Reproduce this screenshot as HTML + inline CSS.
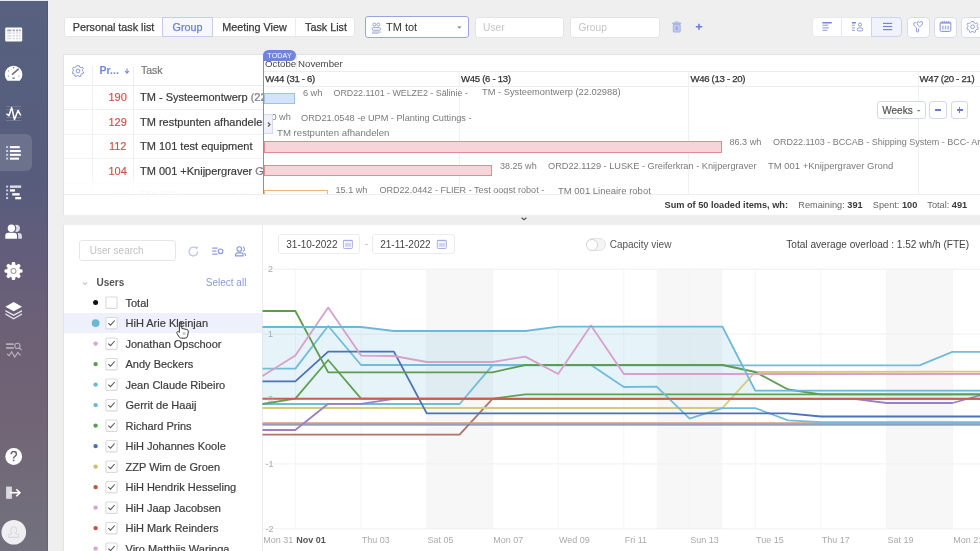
<!DOCTYPE html>
<html><head><meta charset="utf-8">
<style>
*{box-sizing:border-box;margin:0;padding:0}
html,body{width:980px;height:551px;overflow:hidden;background:#efefef;font-family:"Liberation Sans",sans-serif;color:#444;font-size:11px}
.a{position:absolute}
#side{left:0;top:0;width:48px;height:551px;background:linear-gradient(180deg,rgb(89,97,128) 0%,rgb(86,96,126) 9%,rgb(88,92,124) 33.6%,rgb(98,93,123) 45.4%,rgb(108,96,118) 59.9%,rgb(112,99,117) 72.6%,rgb(114,106,120) 86.2%,rgb(114,112,125) 98%)}
.ico{position:absolute;left:0;width:28px;display:flex;justify-content:center}
.tabs{left:64px;top:17px;height:20px;width:291px;background:#fff;border:1px solid #e6e6ea;border-radius:3px}
.tab{position:absolute;top:0;height:20px;line-height:19px;font-size:10.8px;color:#3a3a3a;text-align:center;-webkit-text-stroke:.25px #3a3a3a}
.inp{background:#fff;border:1px solid #e4e4e8;border-radius:3px;height:21px;line-height:19px;color:#bbb;padding-left:9px;font-size:11px}
.btn{background:#fff;border:1px solid #d4d8ef;border-radius:4px;height:21px}
.panel{background:#fff}
.t{position:absolute;white-space:nowrap}
.g{font-size:9.3px;color:#7a7a7a}
.g2{font-size:9.6px}
</style></head><body><div style="position:absolute;left:0;top:0;width:980px;height:551px;will-change:transform">
<div id="side" class="a">
  <div class="a" style="left:0;top:0;width:48px;height:1px;background:#e9e9ee"></div>
  <div class="a" style="left:0;top:134px;width:32px;height:37px;background:rgba(255,255,255,0.13);border-radius:0 6px 6px 0"></div>
<svg class="a" style="left:0;top:0" width="48" height="551" viewBox="0 0 48 551">
 <g fill="#fff">
  <!-- table -->
  <rect x="5.2" y="27.6" width="17" height="13.8" rx="1.2"/>
  <g fill="#a3a7bd">
   <rect x="7.2" y="29.5" width="4.3" height="1.8"/><rect x="12.6" y="29.5" width="2.4" height="1.8"/><rect x="16" y="29.5" width="2.4" height="1.8"/><rect x="19.2" y="29.5" width="1.6" height="1.8"/>
  </g>
  <g fill="#d8dae4">
   <rect x="7.2" y="32.3" width="4.3" height="1.6"/><rect x="12.6" y="32.3" width="2.4" height="1.6"/><rect x="16" y="32.3" width="2.4" height="1.6"/><rect x="19.2" y="32.3" width="1.6" height="1.6"/>
   <rect x="7.2" y="35" width="4.3" height="1.6"/><rect x="12.6" y="35" width="2.4" height="1.6"/><rect x="16" y="35" width="2.4" height="1.6"/><rect x="19.2" y="35" width="1.6" height="1.6"/>
   <rect x="7.2" y="37.7" width="4.3" height="1.6"/><rect x="12.6" y="37.7" width="2.4" height="1.6"/><rect x="16" y="37.7" width="2.4" height="1.6"/><rect x="19.2" y="37.7" width="1.6" height="1.6"/>
  </g>
  <!-- gauge -->
  <path d="M7.46 80.8 A8.8 8.8 0 1 1 19.74 80.8 Z"/>
  <g fill="#6d7088"><rect x="12.2" y="77.4" width="2.8" height="1.3" rx=".6"/><circle cx="13.6" cy="67.8" r=".7"/><circle cx="8.5" cy="71" r=".6"/><circle cx="8.4" cy="76" r=".6"/><circle cx="18.9" cy="76" r=".6"/></g>
  <path d="M12.6 74.2 L18.3 69.2" stroke="#6d7088" stroke-width="1.6" stroke-linecap="round"/>
  <!-- pulse -->
  <g fill="#7d84a4"><rect x="6.1" y="106.3" width="15" height=".7"/><rect x="6.1" y="109.4" width="15" height=".7"/><rect x="6.1" y="117" width="15" height=".7"/><rect x="6.1" y="120" width="15" height=".7"/></g>
  <path d="M6.4 113.7 L8.9 115.8 L11.7 107.6 L14.5 119.6 L18 110.4 L20.8 115.5" fill="none" stroke="#fff" stroke-width="1.5" stroke-linejoin="round"/>
  <!-- list -->
  <g fill="#c9cde6"><rect x="6.1" y="146.1" width="2" height="2"/><rect x="6.1" y="150" width="2" height="2"/><rect x="6.1" y="153.8" width="2" height="2"/><rect x="6.1" y="157.6" width="2" height="2"/></g>
  <rect x="9.9" y="146.1" width="9.9" height="2.1"/><rect x="9.9" y="150" width="10.9" height="2.1"/><rect x="9.9" y="153.8" width="10.9" height="2.1"/><rect x="9.9" y="157.6" width="9.1" height="2.1"/>
  <!-- gantt -->
  <g fill="#c9cde6"><rect x="6.1" y="185.6" width="2" height="2"/><rect x="6.1" y="189.4" width="2" height="2"/><rect x="6.1" y="193.3" width="2" height="2"/><rect x="6.1" y="197.1" width="2" height="2"/></g>
  <rect x="9.9" y="185.5" width="11.2" height="2.3" fill="#dfe1ee"/><rect x="9.9" y="189.3" width="5.1" height="2.3"/><rect x="12.2" y="193.2" width="7.4" height="2.3"/><rect x="15.2" y="197" width="5.9" height="2.3"/>
  <!-- users -->
  <circle cx="11.4" cy="228.2" r="3.7"/>
  <path d="M5.3 238.8 V235.6 Q5.3 232.7 8.3 232.7 H14 Q17 232.7 17 235.6 V238.8 Z"/>
  <mask id="um"><rect x="0" y="215" width="30" height="30" fill="#fff"/><circle cx="11.4" cy="228.2" r="4.9" fill="#000"/><path d="M4.2 240 V235.6 Q4.2 231.6 8.3 231.6 H14 Q18.2 231.6 18.2 235.6 V240 Z" fill="#000"/></mask>
  <g mask="url(#um)" fill="#dcdce8"><circle cx="16.3" cy="228.3" r="3.6"/><path d="M11 238.8 V235.8 Q11 232.9 14 232.9 H18.6 Q21.9 232.9 21.9 235.8 V238.8 Z"/></g>
  <!-- gear -->
  <g transform="translate(13.5 271)">
   <circle r="6.8"/>
   <g id="tooth"><rect x="-1.8" y="-9" width="3.6" height="3.4" rx="1.3"/></g>
   <use href="#tooth" transform="rotate(45)"/><use href="#tooth" transform="rotate(90)"/><use href="#tooth" transform="rotate(135)"/><use href="#tooth" transform="rotate(180)"/><use href="#tooth" transform="rotate(225)"/><use href="#tooth" transform="rotate(270)"/><use href="#tooth" transform="rotate(315)"/>
   <circle r="2.5" fill="none" stroke="#a09cb0" stroke-width="1.1"/>
  </g>
  <!-- layers -->
  <path d="M5.4 313.3 L13.7 317.9 L22 313.3 L22 314.8 L13.7 319.4 L5.4 314.8 Z" fill="#e4e1ec"/>
  <path d="M5.4 310 L13.7 314.6 L22 310 L22 311.5 L13.7 316.1 L5.4 311.5 Z" fill="#ecebf2"/>
  <path d="M5.4 306.7 L13.7 302.1 L22 306.7 L13.7 311.3 Z"/>
  <!-- search pulse -->
  <g opacity=".5">
   <rect x="6.1" y="343.3" width="7.6" height="1.7"/><rect x="6.1" y="347.1" width="7.6" height="1.7"/>
   <circle cx="17.4" cy="345.9" r="2.6" fill="none" stroke="#fff" stroke-width="1.1"/>
   <path d="M19.3 347.9 L21.6 350.2" stroke="#fff" stroke-width="1.2"/>
   <path d="M7.1 354 L9.1 355.6 L11.7 351.8 L14.7 357.1 L17.8 352.5 L20.6 355.3" fill="none" stroke="#fff" stroke-width="1.2"/>
  </g>
  <!-- help -->
  <circle cx="13.7" cy="456.5" r="8.4"/>
  <path d="M11.2 454.2 Q11.2 451.4 13.8 451.4 Q16.4 451.4 16.4 453.9 Q16.4 455.4 14.8 456.3 Q13.6 457 13.6 458.5" fill="none" stroke="#6b6675" stroke-width="1.5"/>
  <rect x="12.8" y="459.6" width="1.6" height="1.6" fill="#6b6675"/>
  <!-- logout -->
  <rect x="6.1" y="486.6" width="5.8" height="12.2" fill="#d9d8de"/>
  <path d="M9.9 492.7 H20" stroke="#fff" stroke-width="1.6"/>
  <path d="M16.3 489.2 L19.9 492.7 L16.3 496.3" fill="none" stroke="#fff" stroke-width="1.6"/>
  <!-- avatar -->
  <circle cx="13.8" cy="532.2" r="12.3" fill="#efeef1"/>
  <path d="M12 533.5 Q10.8 532.3 10.8 529.7 Q10.8 526.8 13.7 526.8 Q16.6 526.8 16.6 529.7 Q16.6 532.3 15.4 533.5 L18.7 534.6 V537.3 H8.8 V534.6 Z" fill="none" stroke="#cfcfd4" stroke-width=".8"/>
 </g>
</svg>
</div>
<div class="a" style="left:47px;top:1px;width:1px;height:550px;background:rgba(0,0,20,.1)"></div>

<!-- toolbar -->
<div class="a tabs">
  <div class="tab" style="left:0;width:97px">Personal task list</div>
  <div class="a" style="left:97px;top:-1px;width:51px;height:20px;border:1px solid #c5cdee;background:#f7f8fd"></div>
  <div class="tab" style="left:97px;width:51px;color:#6b7fd0;-webkit-text-stroke:.25px #6b7fd0">Group</div>
  <div class="a" style="left:230px;top:0;width:1px;height:18px;background:#ececf0"></div>
  <div class="tab" style="left:148px;width:83px">Meeting View</div>
  <div class="tab" style="left:231px;width:60px">Task List</div>
</div>
<div class="a" style="left:365px;top:16px;width:104px;height:22px;background:#fff;border:1px solid #9aa6e2;border-radius:3px"></div>
<div class="t" style="left:386px;top:21px;font-size:11px;color:#333">TM tot</div>
<div class="a inp" style="left:474.6px;top:16.6px;width:89.5px;height:21px;font-size:10.2px;padding-left:7.5px;line-height:20px;color:#c4c4c4">User</div>
<div class="a inp" style="left:570px;top:16.6px;width:89.5px;height:21px;font-size:10.2px;padding-left:7.5px;line-height:20px;color:#c4c4c4">Group</div>

<svg class="a" style="left:360px;top:12px" width="360" height="30" viewBox="360 12 360 30">
  <!-- users icon in select -->
  <g fill="none" stroke="#8d9ad8" stroke-width=".9">
   <circle cx="374.3" cy="24.6" r="1.5"/><circle cx="378.3" cy="24.6" r="1.5"/>
   <rect x="372.2" y="27.6" width="8.3" height="2.6" rx="1.2"/>
  </g>
  <rect x="372" y="31.6" width="8.8" height=".9" fill="#8d9ad8"/><rect x="372" y="33.2" width="6.5" height=".8" fill="#b8c0e6"/>
  <path d="M457.2 26.4 H461.6 L459.4 28.6 Z" fill="#777"/>
  <!-- trash -->
  <path d="M672.2 23.3 H681.2" stroke="#a7b2e6" stroke-width="1.3"/>
  <path d="M674.6 23 Q674.6 22 676 22 H677.6 Q679 22 679 23" fill="none" stroke="#a7b2e6" stroke-width="1"/>
  <rect x="673.3" y="24.4" width="6.9" height="7.6" rx="1" fill="#c6cef0" stroke="#a7b2e6" stroke-width="1.1"/>
  <rect x="675.4" y="26" width="2.7" height="4.4" fill="#a3aee4"/>
  <!-- plus -->
  <path d="M695.8 26.8 H702.3 M699 23.8 V29.8" stroke="#6b7fd8" stroke-width="1.6"/>
</svg>
<div class="a" style="left:812px;top:16.5px;width:90px;height:20.5px;background:#fff;border:1px solid #e8e8ee;border-radius:4px"></div>
<div class="a" style="left:841px;top:17px;width:1px;height:19.5px;background:#e8e8ee"></div>
<div class="a" style="left:871px;top:16.5px;width:31px;height:20.5px;background:#f1f3fc;border:1px solid #cdd3ef;border-radius:0 4px 4px 0"></div>
<div class="a" style="left:906.5px;top:16.5px;width:23px;height:21px;background:#fff;border:1px solid #d6dbf2;border-radius:4px"></div>
<div class="a" style="left:934.3px;top:16.5px;width:22.4px;height:21px;background:#fff;border:1px solid #d6dbf2;border-radius:4px"></div>
<div class="a" style="left:961.2px;top:16.5px;width:23px;height:21px;background:#fff;border:1px solid #d6dbf2;border-radius:4px"></div>
<svg class="a" style="left:800px;top:12px" width="180" height="30" viewBox="800 12 180 30">
  <g fill="#7585d2"><rect x="822.3" y="22" width="9.4" height="1.5"/></g>
  <g fill="#a8b1dc"><rect x="822.3" y="24.6" width="6.1" height="1.3"/><rect x="822.3" y="27.2" width="6.6" height="1.3"/><rect x="822.3" y="29.7" width="5.1" height="1.3"/>
   <rect x="851.9" y="24.6" width="3" height="1.3"/><rect x="851.9" y="27.2" width="3" height="1.3"/><rect x="851.9" y="29.7" width="3" height="1.3"/></g>
  <rect x="851.9" y="22" width="4" height="1.5" fill="#7585d2"/>
  <g fill="none" stroke="#8591cc" stroke-width=".9"><circle cx="860" cy="24.6" r="1.6"/><rect x="857.2" y="27.9" width="5.6" height="3" rx="1.5"/></g>
  <g fill="#7a86c0"><rect x="883" y="22.8" width="9.2" height="1.2"/><rect x="883" y="25.9" width="9.2" height="1.2"/><rect x="883" y="29" width="9.2" height="1.2"/></g>
  <!-- funnel heart -->
  <path d="M915.7 22.4 Q913.4 22.7 913.6 24.3 Q914.1 26 916.4 27.8 V31.3 Q916.6 32.1 917.7 32 Q918.6 31.9 918.6 31.2 V28.6" fill="none" stroke="#8290cf" stroke-width=".9"/>
  <path d="M919.8 27 Q916.8 24.8 917 23 Q917.3 21.3 918.7 21.6 Q919.5 21.8 919.8 22.6 Q920.2 21.6 921.2 21.5 Q922.8 21.5 922.6 23.2 Q922.3 25 919.8 27 Z" fill="none" stroke="#8290cf" stroke-width=".9"/>
  <!-- calendar -->
  <rect x="940.2" y="22.2" width="10.6" height="9.2" rx="1.2" fill="none" stroke="#8290cf" stroke-width="1"/>
  <rect x="940.2" y="22.6" width="10.6" height="1" fill="#8290cf"/><g fill="#8290cf"><circle cx="942.6" cy="21.8" r=".6"/><circle cx="944.6" cy="21.8" r=".6"/><circle cx="946.6" cy="21.8" r=".6"/><circle cx="948.6" cy="21.8" r=".6"/></g>
  <g fill="#a5b0dc"><rect x="942.2" y="25.6" width="1.4" height="4"/><rect x="944.8" y="25.6" width="1.4" height="4"/><rect x="947.4" y="25.6" width="1.4" height="4"/></g>
  <!-- gear -->
  <g transform="translate(972.6 26.8)" fill="none" stroke="#8a96d2" stroke-width=".9">
   <path d="M-1.2 -5.3 L1.2 -5.3 L1.6 -3.9 L2.9 -3.3 L4.2 -4 L5.3 -2.4 L4.4 -1.3 L4.6 0 L5.6 0.9 L5 2.7 L3.6 2.7 L2.8 3.8 L3 5.1 L1.3 5.7 L0.5 4.6 L-0.9 4.6 L-1.6 5.7 L-3.3 5 L-3.1 3.6 L-4 2.7 L-5.3 2.8 L-5.8 1 L-4.7 0.2 L-4.7 -1.2 L-5.6 -2.2 L-4.6 -3.8 L-3.3 -3.3 L-2.1 -4 Z"/>
   <circle r="1.9"/>
  </g>
</svg>
<!-- top panel -->
<div class="a panel" style="left:63px;top:54px;width:920px;height:161px;border-left:1px solid #e3e3e3;border-top:1.5px solid #e2e2e2"></div>
<div id="gantt" class="a" style="left:64px;top:55px;width:916px;height:160px;overflow:hidden">
 <!-- left table grid -->
 <div class="a" style="left:0;top:30px;width:199.5px;height:1px;background:#ebebef"></div>
 <div class="a" style="left:28.3px;top:11px;width:1px;height:128px;background:#efeff2"></div>
 <div class="a" style="left:69.3px;top:11px;width:1px;height:128px;background:#efeff2"></div>
 <div class="a" style="left:0;top:54px;width:199.5px;height:1px;background:#f1f1f4"></div>
 <div class="a" style="left:0;top:78.8px;width:199.5px;height:1px;background:#f1f1f4"></div>
 <div class="a" style="left:0;top:103.3px;width:199.5px;height:1px;background:#f1f1f4"></div>
 <div class="a" style="left:0;top:127.8px;width:199.5px;height:1px;background:#f4f4f6"></div>
 <svg class="a" style="left:8px;top:10px" width="12" height="12" viewBox="-6 -6 12 12">
  <g fill="none" stroke="#7f8fd6" stroke-width=".9">
   <path d="M-1.2 -5.3 L1.2 -5.3 L1.6 -3.9 L2.9 -3.3 L4.2 -4 L5.3 -2.4 L4.4 -1.3 L4.6 0 L5.6 0.9 L5 2.7 L3.6 2.7 L2.8 3.8 L3 5.1 L1.3 5.7 L0.5 4.6 L-0.9 4.6 L-1.6 5.7 L-3.3 5 L-3.1 3.6 L-4 2.7 L-5.3 2.8 L-5.8 1 L-4.7 0.2 L-4.7 -1.2 L-5.6 -2.2 L-4.6 -3.8 L-3.3 -3.3 L-2.1 -4 Z"/>
   <circle r="1.9"/>
  </g>
 </svg>
 <div class="t" style="left:35.6px;top:9px;font-size:10.5px;font-weight:bold;color:#7485d4">Pr...</div>
 <svg class="a" style="left:60px;top:13px" width="6" height="6" viewBox="0 0 6 6"><path d="M3 0.4 V5 M1 3 L3 5.2 L5 3" fill="none" stroke="#7a8ad6" stroke-width="1.1"/></svg>
 <div class="t" style="left:77px;top:9px;font-size:10.5px;color:#777;-webkit-text-stroke:.2px #777">Task</div>
 <div class="t" style="left:44.5px;top:36px;width:18px;text-align:right;font-size:11px;color:#cc5046;-webkit-text-stroke:.15px #cc5046">190</div>
 <div class="t" style="left:44.5px;top:60.5px;width:18px;text-align:right;font-size:11px;color:#cc5046;-webkit-text-stroke:.15px #cc5046">129</div>
 <div class="t" style="left:44.5px;top:85px;width:18px;text-align:right;font-size:11px;color:#cc5046;-webkit-text-stroke:.15px #cc5046">112</div>
 <div class="t" style="left:44.5px;top:109.5px;width:18px;text-align:right;font-size:11px;color:#cc5046;-webkit-text-stroke:.15px #cc5046">104</div>
 <div class="t" style="left:44.5px;top:134px;width:18px;text-align:right;font-size:11px;color:#cc5046;-webkit-text-stroke:.15px #cc5046;opacity:.25">100</div>
 <div class="t" style="left:76px;top:36px;font-size:11px;color:#3a3a3a;-webkit-text-stroke:.2px #3a3a3a">TM - Systeemontwerp <span style="color:#999">(22.02988)</span></div>
 <div class="t" style="left:76px;top:60.5px;font-size:11px;color:#3a3a3a;-webkit-text-stroke:.2px #3a3a3a">TM restpunten afhandelen</div>
 <div class="t" style="left:76px;top:85px;font-size:11px;color:#3a3a3a;-webkit-text-stroke:.2px #3a3a3a">TM 101 test equipment</div>
 <div class="t" style="left:76px;top:109.5px;font-size:11px;color:#3a3a3a;-webkit-text-stroke:.2px #3a3a3a">TM 001 +Knijpergraver <span style="color:#999">Grond</span></div>
 <div class="t" style="left:76px;top:134px;font-size:11px;color:#3a3a3a;-webkit-text-stroke:.2px #3a3a3a;opacity:.25">TM 001 Lineaire robot</div>
 <div class="a" style="left:0;top:120px;width:199.5px;height:19px;background:linear-gradient(180deg,rgba(255,255,255,0) 0%,rgba(255,255,255,.8) 45%,rgba(255,255,255,.9) 100%)"></div>
 <div class="a" style="left:0;top:138.5px;width:199.5px;height:22px;background:#fff"></div>

 <!-- gantt area -->
 <div class="a" style="left:199.5px;top:0;width:720px;height:139px;background:#fff;overflow:hidden">
  <div class="a" style="left:0;top:15.5px;width:720px;height:1px;background:#ededf1"></div>
  <div class="a" style="left:0;top:30.5px;width:720px;height:1px;background:#ededf1"></div>
  <div class="a" style="left:32.8px;top:0;width:1px;height:15.5px;background:#ededf1"></div>
  <div class="a" style="left:195.5px;top:15.5px;width:1px;height:124px;background:#f0f0f3"></div>
  <div class="a" style="left:424.9px;top:15.5px;width:1px;height:124px;background:#f0f0f3"></div>
  <div class="a" style="left:654.1px;top:15.5px;width:1px;height:124px;background:#f0f0f3"></div>
  <div class="t" style="left:1.5px;top:3px;font-size:9.7px;color:#444;width:31px;overflow:hidden">October</div>
  <div class="t" style="left:34.5px;top:3px;font-size:9.7px;color:#444">November</div>
  <div class="t" style="left:1.8px;top:18.4px;font-size:9.6px;letter-spacing:-.3px;color:#333;-webkit-text-stroke:.25px #333">W44 (31 - 6)</div>
  <div class="t" style="left:197.5px;top:18.4px;font-size:9.6px;letter-spacing:-.3px;color:#333;-webkit-text-stroke:.25px #333">W45 (6 - 13)</div>
  <div class="t" style="left:426.9px;top:18.4px;font-size:9.6px;letter-spacing:-.3px;color:#333;-webkit-text-stroke:.25px #333">W46 (13 - 20)</div>
  <div class="t" style="left:656.1px;top:18.4px;font-size:9.6px;letter-spacing:-.3px;color:#333;-webkit-text-stroke:.25px #333">W47 (20 - 21)</div>
  <!-- bars -->
  <div class="a" style="left:0.5px;top:37.7px;width:31px;height:11px;background:#d3e3fa;border:1px solid #9fbff0"></div>
  <div class="a" style="left:0.5px;top:86.2px;width:457.5px;height:11.5px;background:#f5d5d9;border:1px solid #e08c92"></div>
  <div class="a" style="left:0.5px;top:110.2px;width:228px;height:11.3px;background:#f5d5d9;border:1px solid #e08c92"></div>
  <div class="a" style="left:0.5px;top:135px;width:64px;height:11px;background:#fff;border:1px solid #efb77a"></div>
  <div class="t g" style="left:39.4px;top:32.6px;font-size:9.28px">6 wh</div>
  <div class="t g" style="left:70px;top:32.6px;font-size:8.87px">ORD22.1101 - WELZE2 - Sälinie -</div>
  <div class="t g g2" style="left:218.5px;top:32.2px;font-size:9.3px">TM - Systeemontwerp (22.02988)</div>
  <div class="t g" style="left:2.8px;top:57px;font-size:9.2px">10 wh</div>
  <div class="t g" style="left:37.5px;top:57.5px;font-size:9.2px">ORD21.0548 -e UPM - Planting Cuttings -</div>
  <div class="t g g2" style="left:13.5px;top:71.9px;font-size:9.63px">TM restpunten afhandelen</div>
  <div class="t g" style="left:465.9px;top:81.6px;font-size:9.13px">86.3 wh</div>
  <div class="t g" style="left:509.4px;top:81.6px;font-size:9.0px">ORD22.1103 - BCCAB - Shipping System - BCC- Ar</div>
  <div class="t g" style="left:236.5px;top:105.5px;font-size:9.04px">38.25 wh</div>
  <div class="t g" style="left:284.5px;top:105.5px;font-size:9.21px">ORD22.1129 - LUSKE - Greiferkran - Knijpergraver</div>
  <div class="t g g2" style="left:504.5px;top:105.1px;font-size:9.46px">TM 001 +Knijpergraver Grond</div>
  <div class="t g" style="left:72px;top:130.3px;font-size:9.1px">15.1 wh</div>
  <div class="t g" style="left:115.9px;top:130.3px;font-size:9.09px">ORD22.0442 - FLIER - Test oogst robot -</div>
  <div class="t g g2" style="left:294.5px;top:129.9px;font-size:9.49px">TM 001 Lineaire robot</div>
  <!-- handle -->
  <div class="a" style="left:-0.8px;top:59.2px;width:10.2px;height:20px;background:#eef0fb;border:1px solid #d6daf0;border-left:none"></div>
  <svg class="a" style="left:2px;top:66px" width="6" height="7" viewBox="0 0 6 7"><path d="M2 1.5 L4 3.5 L2 5.5" fill="none" stroke="#555" stroke-width="1.1"/></svg>
  <!-- today line -->
  <!-- weeks controls -->
  <div class="a btn" style="left:613px;top:46.1px;width:49px;height:17.8px;border-color:#d3d8f0;border-radius:3px"></div>
  <div class="t" style="left:618.8px;top:49.6px;font-size:10px;color:#555;-webkit-text-stroke:.2px #555">Weeks</div>
  <svg class="a" style="left:652px;top:54.3px" width="6" height="4" viewBox="0 0 6 4"><path d="M1 1 H4.6 L2.8 2.8 Z" fill="#777"/></svg>
  <div class="a btn" style="left:665.7px;top:46.1px;width:18.3px;height:17.8px;border-color:#d3d8f0;border-radius:3px"></div>
  <div class="a" style="left:671.8px;top:54.3px;width:6px;height:1.8px;background:#6a7bd0"></div>
  <div class="a btn" style="left:687.1px;top:46.1px;width:17.7px;height:17.8px;border-color:#d3d8f0;border-radius:3px"></div>
  <div class="a" style="left:693px;top:54.3px;width:6px;height:1.7px;background:#6a7bd0"></div>
  <div class="a" style="left:695.15px;top:52.2px;width:1.7px;height:6px;background:#6a7bd0"></div>
 </div>
 <!-- today badge -->
 <div class="a" style="left:199px;top:0;width:1px;height:139px;background:#7e8ed9"></div>
 <!-- footer -->
 <div class="a" style="left:0;top:138.5px;width:916px;height:1px;background:#eeeef1"></div>
 <div class="t" style="left:600.5px;top:145px;font-size:9.2px;color:#666"><b style="color:#3a3a3a">Sum of 50 loaded items, wh:</b>&nbsp;&nbsp;&nbsp; Remaining: <b style="color:#3a3a3a">391</b>&nbsp;&nbsp;&nbsp; Spent: <b style="color:#3a3a3a">100</b>&nbsp;&nbsp;&nbsp; Total: <b style="color:#3a3a3a">491</b></div>
</div>
<div class="a" style="left:64px;top:215px;width:920px;height:10px;background:#eeeeee"></div>
<svg class="a" style="left:520px;top:216px" width="8" height="6" viewBox="0 0 8 6"><path d="M1.6 1.8 L4 3.8 L6.4 1.8" fill="none" stroke="#555" stroke-width="1.2"/></svg>
<!-- bottom panel -->
<div class="a panel" style="left:63px;top:225px;width:920px;height:330px;border-left:1px solid #e3e3e3"></div>
<div class="a" style="left:262px;top:225px;width:1px;height:330px;background:#ececf0"></div>
<div class="a" style="left:64px;top:313.2px;width:198px;height:20px;background:#eef1fb"></div>
<div class="a inp" style="left:79.2px;top:240px;width:96.4px;height:20.6px;border-color:#e6e6ea;color:#c2c2c2;font-size:10px;padding-left:9.5px">User search</div>
<svg class="a" style="left:64px;top:226px" width="198" height="325" viewBox="64 226 198 325">
 <path d="M197.6 251.6 A4.3 4.3 0 1 1 195.6 247.9" fill="none" stroke="#bfc6ec" stroke-width="1.3"/>
 <path d="M194.6 246.4 L198.2 246.9 L196.6 249.8 Z" fill="#bfc6ec"/>
 <g fill="#8a98e0"><rect x="212.2" y="247.5" width="5.4" height="1.2"/><rect x="212.2" y="250.5" width="4.2" height="1.2"/><rect x="212.2" y="253.5" width="5.4" height="1.2"/></g>
 <circle cx="220.6" cy="251.3" r="2.3" fill="none" stroke="#8a98e0" stroke-width="1.1"/>
 <g fill="none" stroke="#8a98e0" stroke-width="1.1"><circle cx="239.3" cy="249" r="2.3"/><path d="M235.6 255.9 V254.9 Q235.6 252.9 237.6 252.9 H241.1 Q243.1 252.9 243.1 254.9 V255.9 Z"/><path d="M243 246.6 Q244.6 247.6 244.4 249.4 Q244.2 250.8 243 251.3 M244.3 253.1 Q245.6 253.9 245.6 255.9"/></g>
 <path d="M82.8 282.4 L85 284.4 L87.2 282.4" fill="none" stroke="#9aa6dc" stroke-width="1"/>
 <circle cx="95.6" cy="302.6" r="2.5" fill="#111"/>
 <rect x="105.9" y="297.0" width="11.2" height="11.4" rx="1.2" fill="#fff" stroke="#d9d9dc" stroke-width="1.1"/>
 <circle cx="95.6" cy="323.1" r="3.9" fill="#6ab8d6"/>
 <rect x="105.9" y="317.5" width="11.2" height="11.4" rx="1.2" fill="#fff" stroke="#d9d9dc" stroke-width="1.1"/>
 <path d="M108.3 323.1 L110.5 325.2 L114.7 320.5" fill="none" stroke="#5a5a5a" stroke-width="1.1"/>
 <circle cx="95.6" cy="343.6" r="2.2" fill="#dca3d2"/>
 <rect x="105.9" y="338.0" width="11.2" height="11.4" rx="1.2" fill="#fff" stroke="#d9d9dc" stroke-width="1.1"/>
 <path d="M108.3 343.6 L110.5 345.7 L114.7 341.0" fill="none" stroke="#5a5a5a" stroke-width="1.1"/>
 <circle cx="95.6" cy="364.1" r="2.2" fill="#5c9e50"/>
 <rect x="105.9" y="358.5" width="11.2" height="11.4" rx="1.2" fill="#fff" stroke="#d9d9dc" stroke-width="1.1"/>
 <path d="M108.3 364.1 L110.5 366.2 L114.7 361.5" fill="none" stroke="#5a5a5a" stroke-width="1.1"/>
 <circle cx="95.6" cy="384.6" r="2.2" fill="#6ab8d6"/>
 <rect x="105.9" y="379.0" width="11.2" height="11.4" rx="1.2" fill="#fff" stroke="#d9d9dc" stroke-width="1.1"/>
 <path d="M108.3 384.6 L110.5 386.7 L114.7 382.0" fill="none" stroke="#5a5a5a" stroke-width="1.1"/>
 <circle cx="95.6" cy="405.1" r="2.2" fill="#6ab8d6"/>
 <rect x="105.9" y="399.5" width="11.2" height="11.4" rx="1.2" fill="#fff" stroke="#d9d9dc" stroke-width="1.1"/>
 <path d="M108.3 405.1 L110.5 407.2 L114.7 402.5" fill="none" stroke="#5a5a5a" stroke-width="1.1"/>
 <circle cx="95.6" cy="425.6" r="2.2" fill="#5c9e50"/>
 <rect x="105.9" y="420.0" width="11.2" height="11.4" rx="1.2" fill="#fff" stroke="#d9d9dc" stroke-width="1.1"/>
 <path d="M108.3 425.6 L110.5 427.7 L114.7 423.0" fill="none" stroke="#5a5a5a" stroke-width="1.1"/>
 <circle cx="95.6" cy="446.1" r="2.2" fill="#4a6fb8"/>
 <rect x="105.9" y="440.5" width="11.2" height="11.4" rx="1.2" fill="#fff" stroke="#d9d9dc" stroke-width="1.1"/>
 <path d="M108.3 446.1 L110.5 448.2 L114.7 443.5" fill="none" stroke="#5a5a5a" stroke-width="1.1"/>
 <circle cx="95.6" cy="466.6" r="2.2" fill="#c9c262"/>
 <rect x="105.9" y="461.0" width="11.2" height="11.4" rx="1.2" fill="#fff" stroke="#d9d9dc" stroke-width="1.1"/>
 <path d="M108.3 466.6 L110.5 468.7 L114.7 464.0" fill="none" stroke="#5a5a5a" stroke-width="1.1"/>
 <circle cx="95.6" cy="487.1" r="2.2" fill="#c8503c"/>
 <rect x="105.9" y="481.5" width="11.2" height="11.4" rx="1.2" fill="#fff" stroke="#d9d9dc" stroke-width="1.1"/>
 <path d="M108.3 487.1 L110.5 489.2 L114.7 484.5" fill="none" stroke="#5a5a5a" stroke-width="1.1"/>
 <circle cx="95.6" cy="507.6" r="2.2" fill="#dca3d2"/>
 <rect x="105.9" y="502.0" width="11.2" height="11.4" rx="1.2" fill="#fff" stroke="#d9d9dc" stroke-width="1.1"/>
 <path d="M108.3 507.6 L110.5 509.7 L114.7 505.0" fill="none" stroke="#5a5a5a" stroke-width="1.1"/>
 <circle cx="95.6" cy="528.1" r="2.2" fill="#c8503c"/>
 <rect x="105.9" y="522.5" width="11.2" height="11.4" rx="1.2" fill="#fff" stroke="#d9d9dc" stroke-width="1.1"/>
 <path d="M108.3 528.1 L110.5 530.2 L114.7 525.5" fill="none" stroke="#5a5a5a" stroke-width="1.1"/>
 <circle cx="95.6" cy="548.6" r="2.2" fill="#dca3d2"/>
 <rect x="105.9" y="543.0" width="11.2" height="11.4" rx="1.2" fill="#fff" stroke="#d9d9dc" stroke-width="1.1"/>
 <path d="M108.3 548.6 L110.5 550.7 L114.7 546.0" fill="none" stroke="#5a5a5a" stroke-width="1.1"/>
 <path d="M179.4 331.8 V323.2 Q179.4 321.9 180.6 321.9 Q181.8 321.9 181.8 323.2 V328.4 L186.8 329.5 Q188.5 329.9 188.3 331.8 L187.6 335.9 Q187.2 338.2 185 338.2 H181.6 Q180.2 338.2 179.2 337 L176.9 333.3 Q176.4 332.1 177.5 331.7 Q178.5 331.4 179.4 332.4 Z" fill="#fff" stroke="#3a3a3a" stroke-width="1"/>
 <path d="M183.2 332.2 V334.8 M184.8 332.4 V334.8" stroke="#777" stroke-width=".6"/>
</svg>
<div class="t" style="left:96.5px;top:277.2px;font-size:10px;font-weight:bold;color:#555">Users</div>
<div class="t" style="left:205.8px;top:276.5px;font-size:10px;color:#8a9ad8">Select all</div>
<div class="t" style="left:125.5px;top:296.7px;font-size:11px;color:#3c3c3c;-webkit-text-stroke:.2px #3c3c3c">Total</div>
<div class="t" style="left:125.5px;top:317.2px;font-size:11px;color:#3c3c3c;-webkit-text-stroke:.2px #3c3c3c">HiH Arie Kleinjan</div>
<div class="t" style="left:125.5px;top:337.7px;font-size:11px;color:#3c3c3c;-webkit-text-stroke:.2px #3c3c3c">Jonathan Opschoor</div>
<div class="t" style="left:125.5px;top:358.2px;font-size:11px;color:#3c3c3c;-webkit-text-stroke:.2px #3c3c3c">Andy Beckers</div>
<div class="t" style="left:125.5px;top:378.7px;font-size:11px;color:#3c3c3c;-webkit-text-stroke:.2px #3c3c3c">Jean Claude Ribeiro</div>
<div class="t" style="left:125.5px;top:399.2px;font-size:11px;color:#3c3c3c;-webkit-text-stroke:.2px #3c3c3c">Gerrit de Haaij</div>
<div class="t" style="left:125.5px;top:419.7px;font-size:11px;color:#3c3c3c;-webkit-text-stroke:.2px #3c3c3c">Richard Prins</div>
<div class="t" style="left:125.5px;top:440.2px;font-size:11px;color:#3c3c3c;-webkit-text-stroke:.2px #3c3c3c">HiH Johannes Koole</div>
<div class="t" style="left:125.5px;top:460.7px;font-size:11px;color:#3c3c3c;-webkit-text-stroke:.2px #3c3c3c">ZZP Wim de Groen</div>
<div class="t" style="left:125.5px;top:481.2px;font-size:11px;color:#3c3c3c;-webkit-text-stroke:.2px #3c3c3c">HiH Hendrik Hesseling</div>
<div class="t" style="left:125.5px;top:501.7px;font-size:11px;color:#3c3c3c;-webkit-text-stroke:.2px #3c3c3c">HiH Jaap Jacobsen</div>
<div class="t" style="left:125.5px;top:522.2px;font-size:11px;color:#3c3c3c;-webkit-text-stroke:.2px #3c3c3c">HiH Mark Reinders</div>
<div class="t" style="left:125.5px;top:542.7px;font-size:11px;color:#3c3c3c;-webkit-text-stroke:.2px #3c3c3c">Viro Matthijs Waringa</div>
<!-- CHART -->
<svg class="a" style="left:0;top:0" width="980" height="551" viewBox="0 0 980 551">
<rect x="426.75" y="269.2" width="65.70" height="259.6" fill="#f7f7f8"/>
<rect x="656.70" y="269.2" width="65.70" height="259.6" fill="#f7f7f8"/>
<rect x="886.65" y="269.2" width="65.70" height="259.6" fill="#f7f7f8"/>
<rect x="262.5" y="268.7" width="718" height="1" fill="#efeff1"/>
<rect x="262.5" y="333.6" width="718" height="1" fill="#efeff1"/>
<rect x="262.5" y="398.5" width="718" height="1" fill="#efeff1"/>
<rect x="262.5" y="463.4" width="718" height="1" fill="#efeff1"/>
<rect x="262.5" y="528.3" width="718" height="1" fill="#efeff1"/>
<rect x="294.85" y="269.2" width="1" height="259.6" fill="#f5f5f6"/>
<rect x="360.55" y="269.2" width="1" height="259.6" fill="#f5f5f6"/>
<rect x="426.25" y="269.2" width="1" height="259.6" fill="#f5f5f6"/>
<rect x="491.95" y="269.2" width="1" height="259.6" fill="#f5f5f6"/>
<rect x="557.65" y="269.2" width="1" height="259.6" fill="#f5f5f6"/>
<rect x="623.35" y="269.2" width="1" height="259.6" fill="#f5f5f6"/>
<rect x="689.05" y="269.2" width="1" height="259.6" fill="#f5f5f6"/>
<rect x="754.75" y="269.2" width="1" height="259.6" fill="#f5f5f6"/>
<rect x="820.45" y="269.2" width="1" height="259.6" fill="#f5f5f6"/>
<rect x="886.15" y="269.2" width="1" height="259.6" fill="#f5f5f6"/>
<rect x="951.85" y="269.2" width="1" height="259.6" fill="#f5f5f6"/>
<path d="M262.50 327 L361.05 327 L393.90 331 L525.30 331 L558.15 326.6 L722.40 326.6 L755.25 390.6 L952.35 390.6 L982.35 390.6 L982.35 398.8 L262.50 398.8 Z" fill="#6db8d6" fill-opacity=".17"/>
<path d="M262.50 434.6 L459.60 434.6 L492.45 398.8 L952.35 398.8 L982.35 398.8" fill="none" stroke="#a8776a" stroke-width="1.8" stroke-linejoin="round"/>
<path d="M262.50 424.9 L952.35 424.9 L982.35 424.9" fill="none" stroke="#5a7cc0" stroke-width="1.4" stroke-linejoin="round"/>
<path d="M262.50 423.3 L952.35 423.3 L982.35 423.3" fill="none" stroke="#dc9a72" stroke-width="1.9" stroke-linejoin="round"/>
<path d="M262.50 408 L722.40 408 L755.25 372 L952.35 371.7 L982.35 371.7" fill="none" stroke="#d4cc78" stroke-width="1.8" stroke-linejoin="round"/>
<path d="M262.50 404 L459.60 404 L492.45 365.3 L919.50 365.3 L952.35 351.8 L982.35 351.8" fill="none" stroke="#72bcd8" stroke-width="1.8" stroke-linejoin="round"/>
<path d="M262.50 430 L295.35 430 L328.20 403.8 L361.05 403.8 L393.90 398.8 L853.80 398.8 L886.65 403 L952.35 403 L985.20 394 L982.35 394" fill="none" stroke="#9a80c8" stroke-width="1.8" stroke-linejoin="round"/>
<path d="M262.50 404 L295.35 398.6 L328.20 360 L361.05 398.6 L492.45 398.6 L525.30 394.3 L952.35 394.3 L982.35 394.3" fill="none" stroke="#62a056" stroke-width="1.8" stroke-linejoin="round"/>
<path d="M262.50 368.6 L295.35 368.6 L328.20 326 L361.05 365 L591.00 365 L623.85 387 L656.70 386.6 L689.55 418.6 L722.40 408.1 L755.25 408.1 L788.10 420.4 L820.95 422.1 L952.35 422.1 L982.35 422.1" fill="none" stroke="#72bcd8" stroke-width="1.8" stroke-linejoin="round"/>
<path d="M262.50 381.4 L295.35 381.4 L328.20 351.6 L393.90 351.6 L426.75 413.4 L788.10 413.4 L820.95 416.5 L952.35 416.5 L982.35 416.5" fill="none" stroke="#4d72ba" stroke-width="1.8" stroke-linejoin="round"/>
<path d="M262.50 398.8 L952.35 398.8 L982.35 398.8" fill="none" stroke="#c75e4c" stroke-width="2.0" stroke-linejoin="round"/>
<path d="M262.50 311 L295.35 311 L328.20 372.4 L492.45 372.4 L525.30 365 L722.40 365 L755.25 372 L788.10 389.5 L820.95 394.3 L952.35 394.3 L982.35 394.3" fill="none" stroke="#5e9c50" stroke-width="1.8" stroke-linejoin="round"/>
<path d="M262.50 376 L295.35 355.6 L328.20 307.6 L361.05 355.6 L393.90 356 L426.75 362 L492.45 362 L525.30 356.6 L558.15 374 L591.00 325.4 L623.85 374 L952.35 374 L982.35 374" fill="none" stroke="#d8a0cc" stroke-width="1.8" stroke-linejoin="round"/>
<path d="M262.50 327 L361.05 327 L393.90 331 L525.30 331 L558.15 326.6 L722.40 326.6 L755.25 390.6 L952.35 390.6 L982.35 390.6" fill="none" stroke="#6db8d6" stroke-width="1.8" stroke-linejoin="round"/>
<text x="268" y="272.4" font-size="9" fill="#aaa" font-family="Liberation Sans">2</text>
<text x="268" y="337.3" font-size="9" fill="#aaa" font-family="Liberation Sans">1</text>
<text x="268" y="402.2" font-size="9" fill="#aaa" font-family="Liberation Sans">0</text>
<text x="265.5" y="467.1" font-size="9" fill="#aaa" font-family="Liberation Sans">-1</text>
<text x="265.5" y="532.0" font-size="9" fill="#aaa" font-family="Liberation Sans">-2</text>
<text x="263.30" y="542.8" font-size="9" fill="#aaa" font-family="Liberation Sans">Mon 31</text>
<text x="296.15" y="542.8" font-size="9" fill="#555" font-weight="bold" font-family="Liberation Sans">Nov 01</text>
<text x="361.85" y="542.8" font-size="9" fill="#aaa" font-family="Liberation Sans">Thu 03</text>
<text x="427.55" y="542.8" font-size="9" fill="#aaa" font-family="Liberation Sans">Sat 05</text>
<text x="493.25" y="542.8" font-size="9" fill="#aaa" font-family="Liberation Sans">Mon 07</text>
<text x="558.95" y="542.8" font-size="9" fill="#aaa" font-family="Liberation Sans">Wed 09</text>
<text x="624.65" y="542.8" font-size="9" fill="#aaa" font-family="Liberation Sans">Fri 11</text>
<text x="690.35" y="542.8" font-size="9" fill="#aaa" font-family="Liberation Sans">Sun 13</text>
<text x="756.05" y="542.8" font-size="9" fill="#aaa" font-family="Liberation Sans">Tue 15</text>
<text x="821.75" y="542.8" font-size="9" fill="#aaa" font-family="Liberation Sans">Thu 17</text>
<text x="887.45" y="542.8" font-size="9" fill="#aaa" font-family="Liberation Sans">Sat 19</text>
<text x="953.15" y="542.8" font-size="9" fill="#aaa" font-family="Liberation Sans">Mon 21</text>
</svg>
<!-- /CHART -->
<!-- chart header -->
<div class="a inp" style="left:278.2px;top:234.1px;width:82.2px;height:20.4px;border-color:#ececf0"></div>
<div class="t" style="left:286.3px;top:239px;font-size:10px;color:#444">31-10-2022</div>
<div class="a inp" style="left:372px;top:234.1px;width:82.7px;height:20.4px;border-color:#ececf0"></div>
<div class="t" style="left:380.2px;top:239px;font-size:10px;color:#444">21-11-2022</div>
<div class="a" style="left:364.6px;top:244.3px;width:3px;height:1px;background:#ccc"></div>
<svg class="a" style="left:340px;top:236px" width="120" height="16" viewBox="340 236 120 16">
 <g fill="#f6f7fd" stroke="#a9b1e2" stroke-width="1"><rect x="343.4" y="240.3" width="9" height="8.2" rx=".9"/><rect x="437.3" y="240.3" width="9" height="8.2" rx=".9"/></g>
 <g fill="#a3abe0"><rect x="343.4" y="240" width="9" height="1.1"/><rect x="437.3" y="240" width="9" height="1.1"/></g>
 <g fill="#cfd4f1"><rect x="345" y="243.1" width="6" height="3.6"/><rect x="438.9" y="243.1" width="6" height="3.6"/></g>
</svg>
<div class="a" style="left:585.9px;top:238.2px;width:19.8px;height:13px;border-radius:7px;background:#f4f4f4;border:1px solid #e2e2e2"></div>
<div class="a" style="left:586.4px;top:238.7px;width:12px;height:12px;border-radius:6px;background:#fff;border:1px solid #d4d4d4"></div>
<div class="t" style="left:609.7px;top:238.5px;font-size:10px;color:#555">Capacity view</div>
<div class="t" style="left:786.3px;top:238.5px;font-size:10.1px;color:#444">Total average overload : 1.52 wh/h (FTE)</div>
<!-- today badge -->
<div class="a" style="left:263.4px;top:49.6px;width:32.4px;height:11.2px;background:#6f84de;border-radius:6px 6px 6px 0;color:#fff;font-size:7px;line-height:11.4px;text-align:center;letter-spacing:.2px">TODAY</div>

</div></body></html>
